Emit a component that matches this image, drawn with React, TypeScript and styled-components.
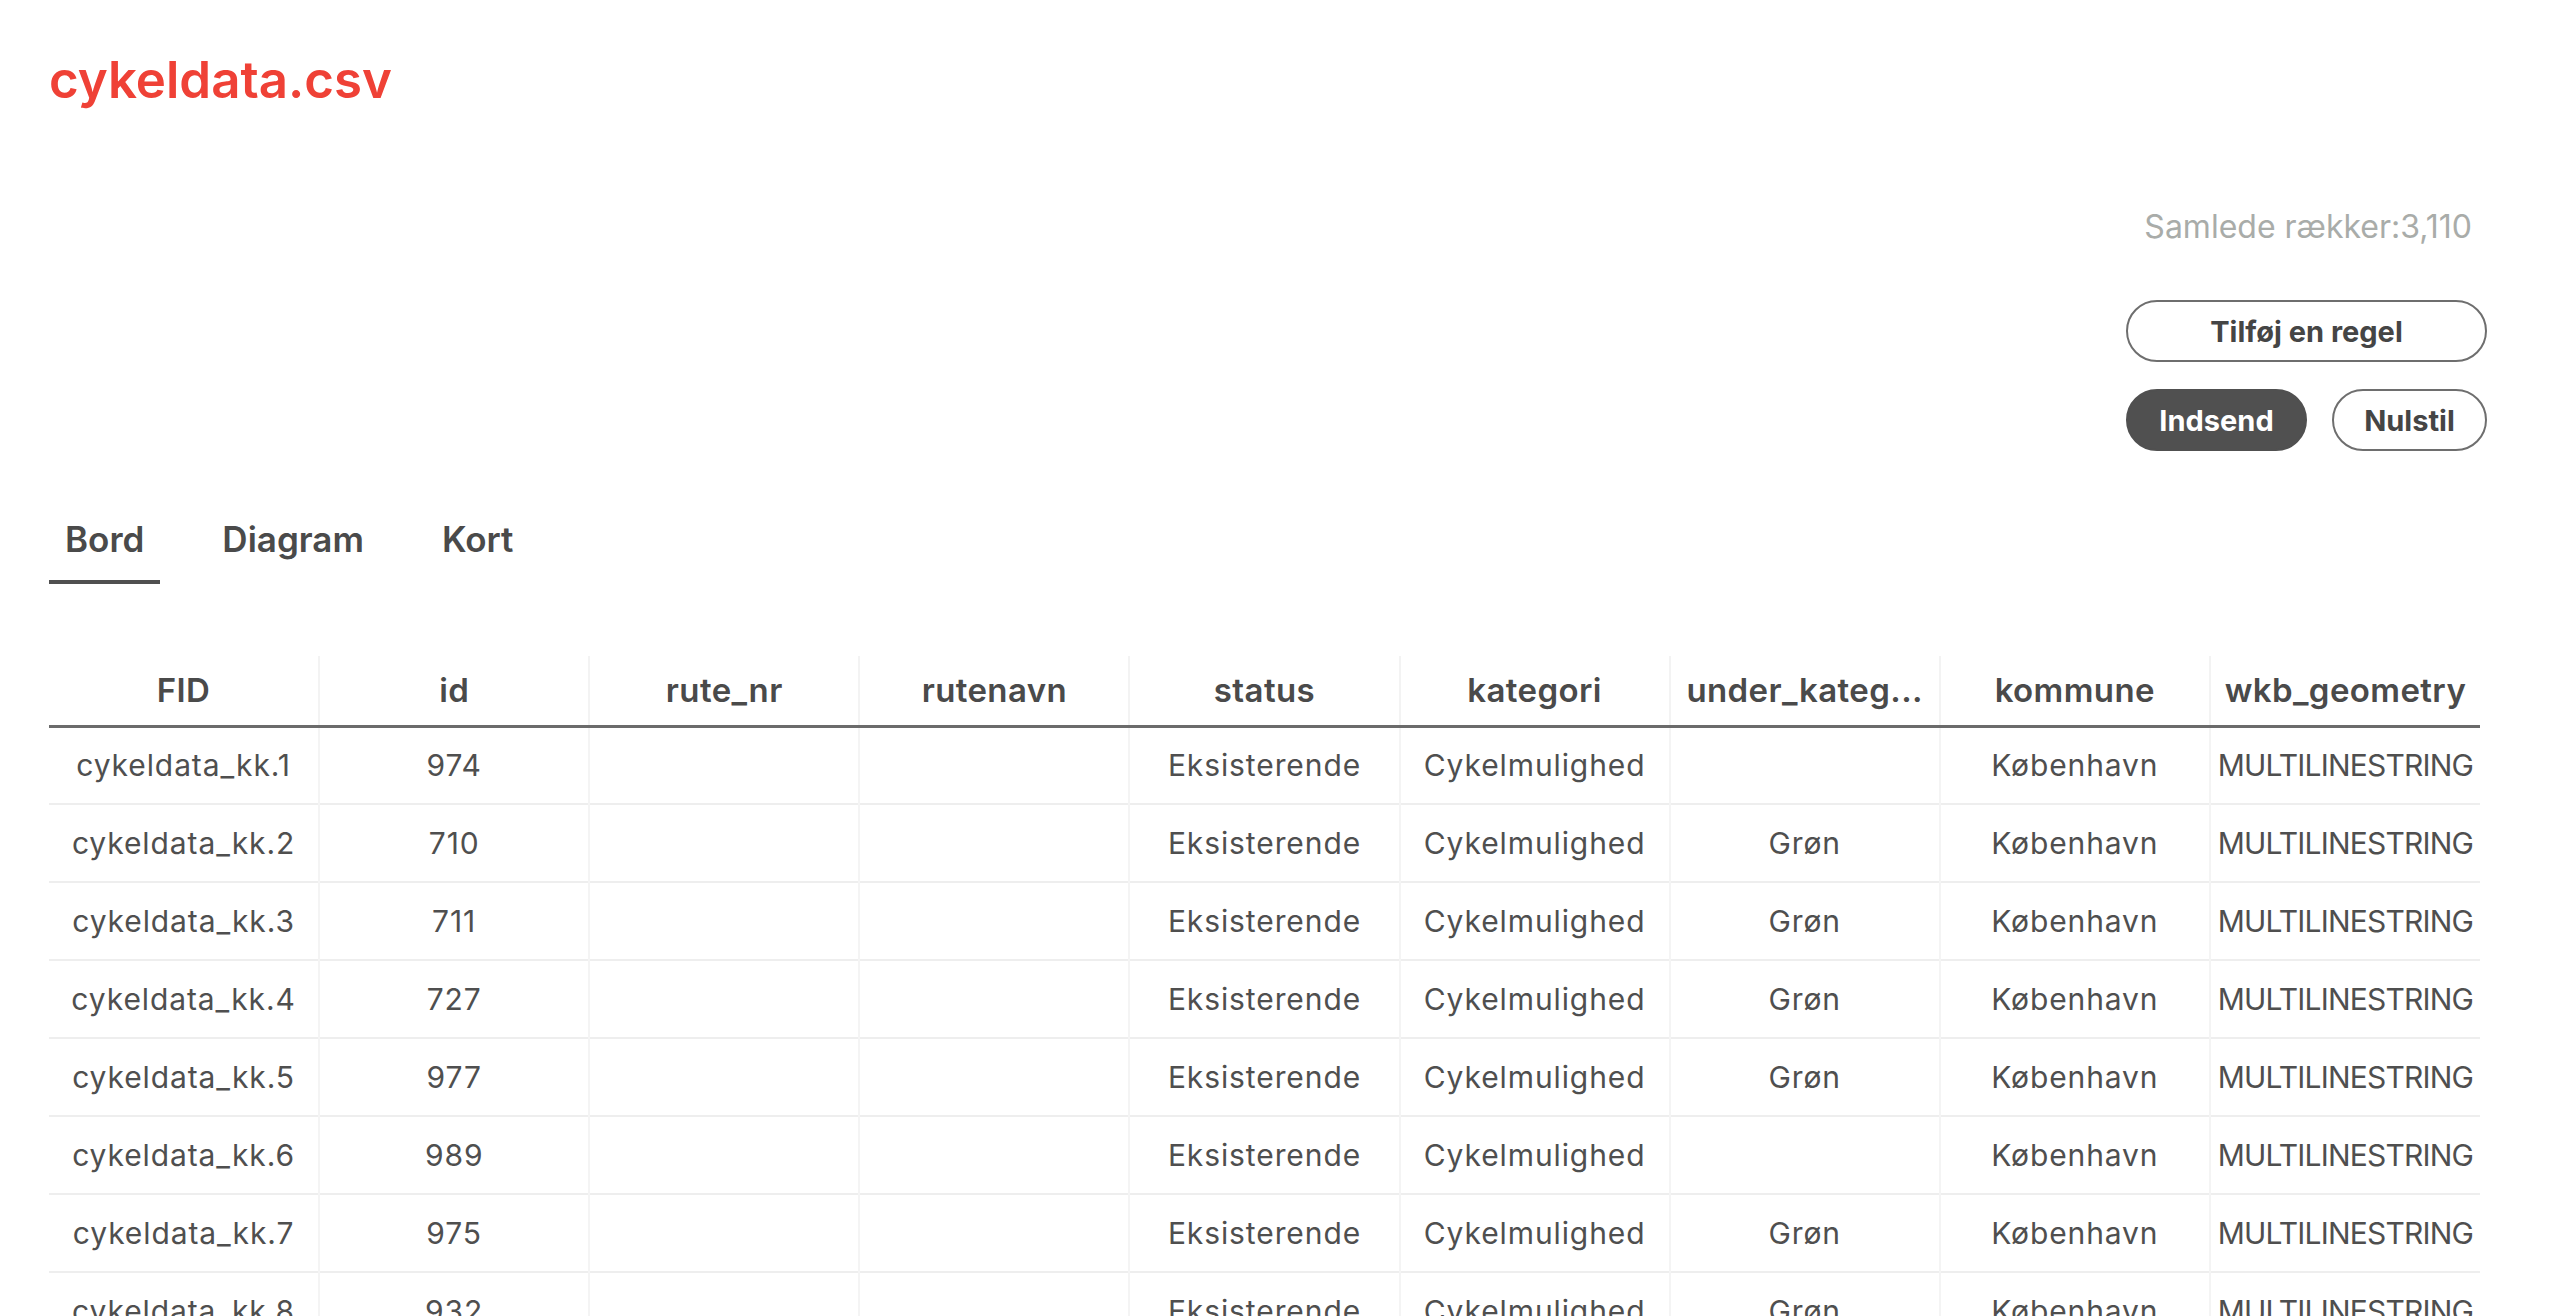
import React from "react";
import styled, { createGlobalStyle } from "styled-components";

const GlobalStyle = createGlobalStyle`
  html, body {
    margin: 0;
    padding: 0;
    background: #ffffff;
    font-family: Inter, "Open Sans", "Liberation Sans", sans-serif;
    color: #4f4f4f;
  }
  * { box-sizing: border-box; }
`;

const Page = styled.div`
  padding: 44px 73px 0 49px;
  display: flex;
  flex-direction: column;
`;

const Title = styled.h1`
  margin: 0;
  font-size: 51px;
  line-height: 72px;
  font-weight: 600;
  color: #ef4136;
  letter-spacing: 0;
`;

const Controls = styled.div`
  display: flex;
  flex-direction: column;
  align-items: flex-end;
  margin-top: 87px;
`;

const TotalRows = styled.div`
  font-size: 32px;
  line-height: 48px;
  font-weight: 400;
  color: #a9aca9;
  margin-right: 15px;
  letter-spacing: 0;
`;

const ButtonStack = styled.div`
  display: flex;
  flex-direction: column;
  gap: 27px;
  margin-top: 49px;
  width: 361px;
`;

const ButtonRow = styled.div`
  display: flex;
  gap: 25px;
`;

const PillButton = styled.button<{ $primary?: boolean; $grow?: boolean }>`
  height: 62px;
  border-radius: 31px;
  border: 2px solid ${(p) => (p.$primary ? "#505050" : "#6e6e6e")};
  background: ${(p) => (p.$primary ? "#505050" : "#ffffff")};
  color: ${(p) => (p.$primary ? "#ffffff" : "#454545")};
  font-family: inherit;
  font-size: 29px;
  font-weight: 700;
  letter-spacing: 0;
  flex: ${(p) => (p.$grow ? "1 1 auto" : "0 0 auto")};
  width: ${(p) => (p.$primary ? "181px" : "auto")};
  padding: 0;
  cursor: pointer;
`;

const Tabs = styled.div`
  display: flex;
  gap: 46px;
  margin-top: 64px;
`;

const Tab = styled.div<{ $active?: boolean }>`
  font-size: 35px;
  line-height: 48px;
  font-weight: 600;
  color: #4a4a4a;
  padding: 0 16px 17px;
  border-bottom: 4px solid ${(p) => (p.$active ? "#505050" : "transparent")};
  letter-spacing: 0;
`;

const TableWrap = styled.div`
  margin-top: 72px;
  margin-right: 7px;
`;

const Table = styled.table`
  width: 100%;
  table-layout: fixed;
  border-collapse: collapse;
`;

const HeadCell = styled.th`
  height: 70px;
  padding: 0 4px;
  font-size: 33px;
  font-weight: 600;
  color: #4a4a4a;
  text-align: center;
  white-space: nowrap;
  overflow: hidden;
  border-bottom: 3px solid #6b6b6b;
  border-left: 2px solid #f3f3f3;
  letter-spacing: 0.4px;
  &:first-child { border-left: none; }
`;

const BodyRow = styled.tr`
  border-bottom: 2px solid #eeeeee;
`;

const Cell = styled.td<{ $caps?: boolean }>`
  height: 78px;
  padding: 0 2px;
  font-size: 30px;
  font-weight: 400;
  color: #4f4f4f;
  text-align: center;
  white-space: nowrap;
  overflow: hidden;
  border-left: 2px solid #f4f4f4;
  letter-spacing: ${(p) => (p.$caps ? "-0.8px" : "0.9px")};
  &:first-child { border-left: none; }
`;

const columns = [
  "FID",
  "id",
  "rute_nr",
  "rutenavn",
  "status",
  "kategori",
  "under_kateg...",
  "kommune",
  "wkb_geometry",
];

const rows: [string, string, string][] = [
  ["cykeldata_kk.1", "974", ""],
  ["cykeldata_kk.2", "710", "Grøn"],
  ["cykeldata_kk.3", "711", "Grøn"],
  ["cykeldata_kk.4", "727", "Grøn"],
  ["cykeldata_kk.5", "977", "Grøn"],
  ["cykeldata_kk.6", "989", ""],
  ["cykeldata_kk.7", "975", "Grøn"],
  ["cykeldata_kk.8", "932", "Grøn"],
];

export default function App() {
  return (
    <>
      <GlobalStyle />
      <Page>
        <Title>cykeldata.csv</Title>
        <Controls>
          <TotalRows>Samlede rækker:3,110</TotalRows>
          <ButtonStack>
            <PillButton $grow>Tilføj en regel</PillButton>
            <ButtonRow>
              <PillButton $primary>Indsend</PillButton>
              <PillButton $grow>Nulstil</PillButton>
            </ButtonRow>
          </ButtonStack>
        </Controls>
        <Tabs>
          <Tab $active>Bord</Tab>
          <Tab>Diagram</Tab>
          <Tab>Kort</Tab>
        </Tabs>
        <TableWrap>
          <Table>
            <thead>
              <tr>
                {columns.map((c) => (
                  <HeadCell key={c}>{c}</HeadCell>
                ))}
              </tr>
            </thead>
            <tbody>
              {rows.map(([fid, id, sub]) => (
                <BodyRow key={fid}>
                  <Cell>{fid}</Cell>
                  <Cell>{id}</Cell>
                  <Cell></Cell>
                  <Cell></Cell>
                  <Cell>Eksisterende</Cell>
                  <Cell>Cykelmulighed</Cell>
                  <Cell>{sub}</Cell>
                  <Cell>København</Cell>
                  <Cell $caps>MULTILINESTRING</Cell>
                </BodyRow>
              ))}
            </tbody>
          </Table>
        </TableWrap>
      </Page>
    </>
  );
}
